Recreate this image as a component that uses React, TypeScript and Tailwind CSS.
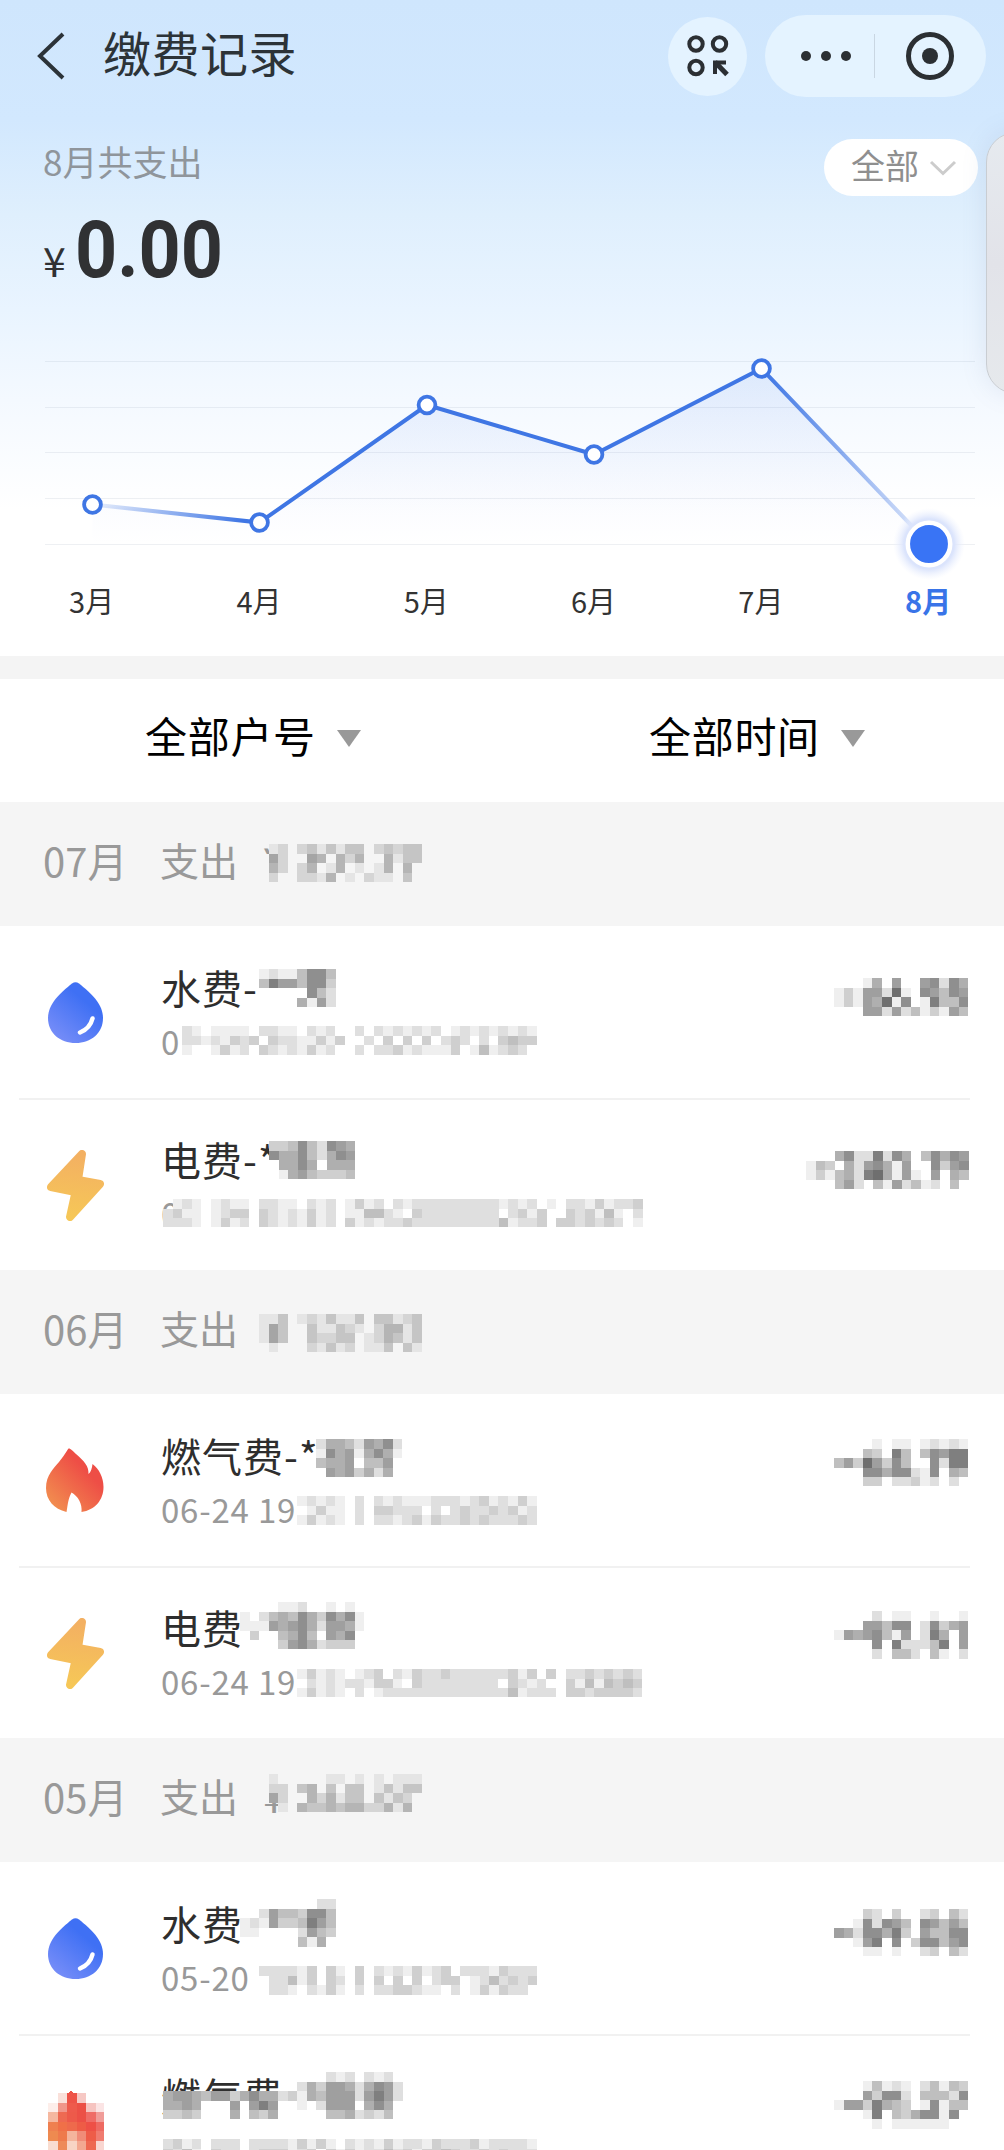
import type { ReactNode } from 'react'

const CELL = 9.59

type Patch = { col: number; top: number; rows: string[] }
type Kind = 'water' | 'power' | 'gas' | 'gasMasked'
type Item = { kind: Kind; name: string; date: string; patches: Patch[] }
type Group = { month: string; mask: Patch; items: Item[] }

const GROUPS: Group[] = [
  {
    month: '07月',
    mask: {
      col: 27,
      top: 42,
      rows: ['.1202313133023233', '05200540424004133', '04202401401014040', '02002214010211030'],
    },
    items: [
      {
        kind: 'water',
        name: '水费-',
        date: '0',
        patches: [
          { col: 27, top: 42.6, rows: ['12114774', '48664773', '00000742', '00005162'] },
          {
            col: 19,
            top: 100,
            rows: [
              '2101111022110212002021212120121212121',
              '2212132303221131300203030302320203433',
              '1001312032121312002022312111301412320',
            ],
          },
          { col: 87, top: 52, rows: ['00015060067275', '13166291076476', '13165917018447', '00066262413164'] },
        ],
      },
      {
        kind: 'power',
        name: '电费-*',
        date: '0',
        patches: [
          { col: 28, top: 43.2, rows: ['334742765', '755742576', '.55750555', '.15643334'] },
          {
            col: 17,
            top: 100.7,
            rows: [
              '.1210121102211021201312021222222222121201022131223',
              '231101233032121312011442103222222220231300323141.2',
              '222101312032121312031212232222222224122303323232.1',
            ],
          },
          {
            col: 84,
            top: 53,
            rows: ['00057228275047576', '14305267516007367', '13145289516106054', '00046204162412040'],
          },
        ],
      },
    ],
  },
  {
    month: '06月',
    mask: {
      col: 27,
      top: 43.8,
      rows: ['11301213113033123', '15300311321024413', '15300322330124313', '01000213120113031'],
    },
    items: [
      {
        kind: 'gas',
        name: '燃气费-*',
        date: '06-24 19',
        patches: [
          { col: 33, top: 44.5, rows: ['255426572', '175615751', '455604460', '065635250'] },
          {
            col: 31,
            top: 102,
            rows: ['1212102021211122212312131', '0131102033222020232232312', '1312102022123132232322232'],
          },
          {
            col: 87,
            top: 44.5,
            rows: ['00001011012121', '00043084047688', '46396374007288', '00077577217054', '00033022312020'],
          },
        ],
      },
      {
        kind: 'power',
        name: '电费',
        date: '06-24 19',
        patches: [
          {
            col: 25,
            top: 35.5,
            rows: ['0000112001010', '1024547537571', '1116567526651', '.300457406570', '0000367523330'],
          },
          {
            col: 31,
            top: 102.7,
            rows: [
              '131210123021322322222231303022323232',
              '021212213310322222222032120031414343',
              '131210201222222222222241222033233332',
            ],
          },
          {
            col: 87,
            top: 45,
            rows: ['00002011001001', '00066477027356', '16567416028506', '00007082224806', '00002044204102'],
          },
        ],
      },
    ],
  },
  {
    month: '05月',
    mask: {
      col: 27,
      top: 36,
      rows: ['01000001101010111', '02203403033013133', '05200424133031320', '..104334344224140'],
    },
    items: [
      {
        kind: 'water',
        name: '水费',
        date: '05-20',
        patches: [
          { col: 25, top: 36.8, rows: ['0000000022.', '0026443774', '1216334864', '1100002643', '0000004150'] },
          {
            col: 27,
            top: 104,
            rows: [
              '22221303103021213123022213222',
              '02241303203030303023301242323',
              '02210213102022332110201313220',
            ],
          },
          {
            col: 87,
            top: 46.5,
            rows: ['00032030023042', '00172764076464', '65277583064477', '00168070377467', '00011010023042'],
          },
        ],
      },
      {
        kind: 'gasMasked',
        name: '燃气费',
        date: '',
        patches: [
          {
            col: 17,
            top: 37.5,
            rows: [
              '.................21202120',
              '..............25366525762',
              '5665466357552315466626862',
              '5565000606860010266605750',
              '3343000504350000044523240',
            ],
          },
          {
            col: 17,
            top: 104.5,
            rows: ['231202220222213131021213122132223122221', '324103220233312303131224231334322323222'],
          },
          {
            col: 87,
            top: 47,
            rows: ['00014121024143', '00063772044427', '16638543017144', '00018043577170', '00001011111100'],
          },
        ],
      },
    ],
  },
]

const POINTS = [
  { x: 92.5, y: 504.5, label: '3月' },
  { x: 259.5, y: 522.5, label: '4月' },
  { x: 427, y: 405, label: '5月' },
  { x: 594, y: 454.5, label: '6月' },
  { x: 761.5, y: 368.5, label: '7月' },
  { x: 929, y: 544, label: '8月' },
]

const FLAME_CELLS = [
  ['', '#fae0da', '#ee5348', '#f6c8c4', '', ''],
  ['#fdeeea', '#f0968a', '#ee5a4c', '#ec5046', '#f6c4c0', '#fbe4e4'],
  ['#f5b8a0', '#ee6a52', '#ed5a4a', '#ec5046', '#ef6c66', '#f09c98'],
  ['#ef8050', '#f07048', '#ee6a4c', '#ee5c46', '#ee5046', '#ee6a62'],
  ['#ee8a50', '#ee7a4c', '#f4b49c', '#f08c78', '#ee5c48', '#f07c70'],
  ['#f9ddd0', '#ee8a58', '#f8d4c4', '#f3a890', '#ee6850', '#f9d6d0'],
]

// "." leaves a cell open, 0-9 goes from the row background to dark gray
function Mosaic({ patch, base = 255 }: { patch: Patch; base?: number }) {
  const w = patch.rows[0].length * CELL
  const h = patch.rows.length * CELL
  return (
    <svg
      className="absolute"
      style={{ left: patch.col * CELL, top: patch.top }}
      width={w}
      height={h}
      shapeRendering="crispEdges"
    >
      {patch.rows.map((row, r) =>
        row.split('').map((ch, c) => {
          if (ch === '.') return null
          const g = base - Number(ch) * 16
          return (
            <rect key={`${r}-${c}`} x={c * CELL} y={r * CELL} width={CELL} height={CELL} fill={`rgb(${g},${g},${g})`} />
          )
        }),
      )}
    </svg>
  )
}

function WaterIcon() {
  return (
    <svg width="55" height="61" viewBox="0 0 55 61">
      <defs>
        <linearGradient id="water" x1="0.75" y1="0.1" x2="0.1" y2="0.95">
          <stop offset="0.2" stopColor="#3f70f4" />
          <stop offset="1" stopColor="#7a8ff8" />
        </linearGradient>
      </defs>
      <path
        d="M24 1.5Q27.500 -1 31 1.500C43 11 55 22 55 36C55 51 43 61 27.500 61S0 51 0 36C0 22 12 11 24 1.500Z"
        fill="url(#water)"
      />
      <path d="M44.500 36.500Q42 46.500 32 50.500" fill="none" stroke="#fff" strokeWidth="4.500" strokeLinecap="round" />
    </svg>
  )
}

function PowerIcon() {
  return (
    <svg className="mt-[3px]" width="57" height="71" viewBox="0 0 57 71">
      <defs>
        <linearGradient id="power" x1="0.5" y1="0" x2="0.4" y2="1">
          <stop offset="0" stopColor="#f3b062" />
          <stop offset="1" stopColor="#f6c757" />
        </linearGradient>
      </defs>
      <path
        d="M35 4L31 30L53 34L23 67L28.500 42L4 37Z"
        fill="url(#power)"
        stroke="url(#power)"
        strokeWidth="8"
        strokeLinejoin="round"
      />
    </svg>
  )
}

function GasIcon() {
  return (
    <svg width="58" height="64" viewBox="0 0 58 64">
      <defs>
        <linearGradient id="gas" x1="0.65" y1="0.3" x2="0.05" y2="0.95">
          <stop offset="0" stopColor="#ee4e46" />
          <stop offset="1" stopColor="#f29350" />
        </linearGradient>
      </defs>
      <path
        d="M22.500 0.500C24 0 27 3 30 6C38 13 43 18 42.500 26C45 24 46 20 46.500 16C53 21 57.500 29 57.500 39C57.500 52 49 62 35.500 64C36.500 56 32 48 25.500 44.500C22 51 22 56 20.500 64C8 61 0 52 0 40C0 27 8 20 13 14C18 8 20 4 22.500 0.500Z"
        fill="url(#gas)"
      />
    </svg>
  )
}

function GasMaskedIcon() {
  return (
    <svg className="mt-[1px] ml-[2px]" width="58" height="62" shapeRendering="crispEdges">
      <path d="M20 4L23 0L26 4Z" fill="#ee5348" />
      {FLAME_CELLS.map((row, r) =>
        row.map((fill, c) =>
          fill ? (
            <rect key={`${r}-${c}`} x={c * CELL} y={r * CELL + 3} width={CELL} height={CELL} fill={fill} />
          ) : null,
        ),
      )}
    </svg>
  )
}

const ICONS: Record<Kind, ReactNode> = {
  water: <WaterIcon />,
  power: <PowerIcon />,
  gas: <GasIcon />,
  gasMasked: <GasMaskedIcon />,
}

function NavBar() {
  return (
    <div className="flex h-[112px] items-center pr-[18px] pl-[36px]">
      <svg width="30" height="48" viewBox="0 0 30 48" fill="none" stroke="#2c3338" strokeWidth="4">
        <path d="M27 2L4 24L27 46" />
      </svg>
      <h1 className="mb-[10px] ml-[37px] text-[48px] leading-none tracking-[0.5px] text-[#2c3338]">缴费记录</h1>
      <div className="ml-auto flex h-[79px] w-[79px] items-center justify-center rounded-full bg-[#e4f3ff]">
        <svg width="42" height="42" viewBox="0 0 42 42" fill="none" stroke="#2b2f33" strokeWidth="4">
          <circle cx="9" cy="9" r="6.7" />
          <circle cx="32.500" cy="9" r="6.700" />
          <circle cx="9" cy="32.500" r="6.700" />
          <path d="M39 27.500H28V39" />
          <path d="M28 27L40 39.500" strokeWidth="5" />
        </svg>
      </div>
      <div className="ml-[18px] flex h-[82px] w-[221px] items-center rounded-full bg-[#e4f3ff]">
        <div className="ml-[36px] flex gap-[10px]">
          <span className="h-[10px] w-[10px] rounded-full bg-[#2b2f33]" />
          <span className="h-[10px] w-[10px] rounded-full bg-[#2b2f33]" />
          <span className="h-[10px] w-[10px] rounded-full bg-[#2b2f33]" />
        </div>
        <span className="ml-[23px] h-[44px] w-px bg-[#c9d6e2]" />
        <span className="ml-[31px] flex h-[48px] w-[48px] items-center justify-center rounded-full border-[5px] border-[#2b2f33]">
          <span className="h-4 w-4 rounded-full bg-[#2b2f33]" />
        </span>
      </div>
    </div>
  )
}

function Summary() {
  return (
    <div className="flex h-[226px] items-start justify-between pr-[26px] pl-[43px]">
      <div>
        <p className="mt-[29px] text-[35px] leading-[40px] text-[#8f959b]">8月共支出</p>
        <div className="mt-[29px] flex items-baseline text-[#303133]">
          <span className="w-[32px] text-[41px] leading-none">¥</span>
          <span className="origin-left scale-x-[0.92] font-['Roboto'] text-[80px] leading-[80px] font-bold">0.00</span>
        </div>
      </div>
      <div className="mt-[27px] flex h-[57px] w-[154px] items-center rounded-full bg-white pl-[27px] text-[34px] leading-none text-[#8f8f8f]">
        <span className="mb-[6px]">全部</span>
        <svg className="ml-[10px]" width="28" height="16" viewBox="0 0 28 16" fill="none" stroke="#cccccc" strokeWidth="3">
          <path d="M2 2L14 13.500L26 2" />
        </svg>
      </div>
    </div>
  )
}

function Chart() {
  const line = POINTS.map((p) => `${p.x},${p.y - 338}`).join(' ')
  return (
    <div className="h-[318px]">
      <svg width="1004" height="244" viewBox="0 0 1004 244">
        <defs>
          <linearGradient id="stroke" gradientUnits="userSpaceOnUse" x1="92" y1="0" x2="929" y2="0">
            <stop offset="0" stopColor="#3f76e4" stopOpacity="0.1" />
            <stop offset="0.18" stopColor="#3f76e4" />
            <stop offset="0.8" stopColor="#3f76e4" />
            <stop offset="1" stopColor="#3f76e4" stopOpacity="0.15" />
          </linearGradient>
          <linearGradient id="area" x1="0" y1="0" x2="0" y2="1">
            <stop offset="0" stopColor="#4a80e8" stopOpacity="0.12" />
            <stop offset="1" stopColor="#6a8cf0" stopOpacity="0" />
          </linearGradient>
          <radialGradient id="halo">
            <stop offset="0.7" stopColor="#dbe4fc" />
            <stop offset="1" stopColor="#eef2fe" stopOpacity="0" />
          </radialGradient>
        </defs>
        {[361.5, 407.5, 452.5, 498.5, 544.5].map((y) => (
          <line key={y} x1="45" x2="975" y1={y - 338} y2={y - 338} stroke="#8a9bb0" strokeOpacity="0.15" />
        ))}
        <polygon points={`${line} 92.500,206`} fill="url(#area)" />
        <polyline points={line} fill="none" stroke="url(#stroke)" strokeWidth="4" />
        {POINTS.slice(0, 5).map((p) => (
          <circle key={p.x} cx={p.x} cy={p.y - 338} r="8.400" fill="#fff" stroke="#3f76e4" strokeWidth="3.800" />
        ))}
        <circle cx="929" cy="206" r="36" fill="url(#halo)" />
        <circle cx="929" cy="206" r="21.200" fill="#3974f5" stroke="#fff" strokeWidth="4.500" />
      </svg>
      <div className="flex px-[8px] pt-[2px]">
        {POINTS.map((p, i) => (
          <span
            key={p.label}
            className={`w-[167.3px] shrink-0 text-center text-[29px] leading-[32px] ${
              i === 5 ? 'font-bold text-[#3974e8]' : 'text-[#333]'
            }`}
          >
            {p.label}
          </span>
        ))}
      </div>
    </div>
  )
}

function Filter({ label }: { label: string }) {
  return (
    <div className="flex w-[504px] shrink-0 items-center pl-[145px] text-[42px] leading-none tracking-[0.7px] text-black">
      <span className="mb-[5px]">{label}</span>
      <svg className="mt-[2px] ml-[21px]" width="24" height="17" viewBox="0 0 24 17">
        <path d="M0 0H24L12 17Z" fill="#999" />
      </svg>
    </div>
  )
}

function Record({ item, last }: { item: Item; last: boolean }) {
  return (
    <div className="relative h-[172px]">
      <div className="flex h-full">
        <div className="flex w-[161px] items-center pl-[46px]">
          <div className="flex w-[58px] justify-center">{ICONS[item.kind]}</div>
        </div>
        <div className="pt-[32px]">
          <p className="text-[40px] leading-[58px] tracking-[1px] text-[#2e2e2e]">{item.name}</p>
          <p className="mt-[5px] text-[33px] leading-[40px] tracking-[0.8px] text-[#999]">{item.date}</p>
        </div>
      </div>
      {item.patches.map((p) => (
        <Mosaic key={`${p.col}-${p.top}`} patch={p} />
      ))}
      {!last && <div className="mt-[-0.5px] mr-[34px] ml-[19px] h-[2px] bg-[#f1f1f1]" />}
    </div>
  )
}

export default function App() {
  return (
    <div className="relative h-[2150px] w-[1004px] overflow-hidden bg-white font-['Noto_Sans_CJK_SC',sans-serif]">
      <header className="h-[656px] bg-linear-[180deg,#cfe6fd_0px,#d2e8fe_120px,#dfeffd_215px,#e9f4ff_310px,#f4f9ff_400px,#ffffff_510px]">
        <NavBar />
        <Summary />
        <Chart />
      </header>
      <div className="h-[23px] bg-[#f4f4f4]" />
      <div className="flex h-[123px] pb-[6px]">
        <Filter label="全部户号" />
        <Filter label="全部时间" />
      </div>
      {GROUPS.map((g) => (
        <section key={g.month}>
          <div className="relative flex h-[124px] items-center bg-[#f5f5f5] pb-[9px] pl-[43px] text-[40px] leading-none text-[#999]">
            <span className="w-[117px]">{g.month}</span>
            <span className="w-[103px] text-[39px]">支出</span>
            <span>¥</span>
            <Mosaic patch={g.mask} base={245} />
          </div>
          {g.items.map((item, i) => (
            <Record key={i} item={item} last={i === g.items.length - 1} />
          ))}
        </section>
      ))}
      {/* floating drawer handle at the screen edge */}
      <div className="absolute top-[132px] left-[986px] h-[262px] w-[60px] rounded-[36px] border border-[#c9cdd2] bg-linear-[180deg,#e6eaef,#e2e3e9_50%,#e6e9ec] shadow-[0_0_26px_rgba(110,130,160,0.14)]" />
    </div>
  )
}
